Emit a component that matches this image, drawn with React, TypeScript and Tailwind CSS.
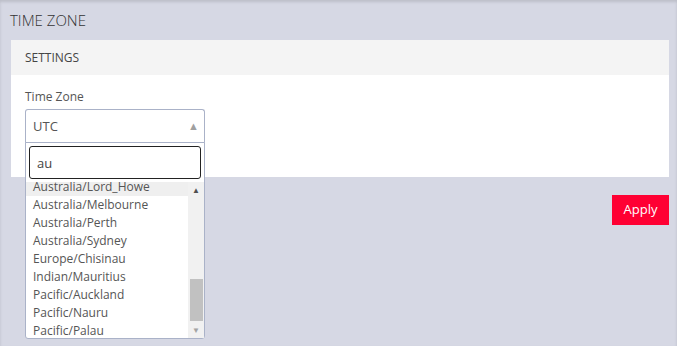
import { useState } from "react"

const zones = [
    "Australia/Lord_Howe",
    "Australia/Melbourne",
    "Australia/Perth",
    "Australia/Sydney",
    "Europe/Chisinau",
    "Indian/Mauritius",
    "Pacific/Auckland",
    "Pacific/Nauru",
    "Pacific/Palau",
]

function ZoneSelect() {
    const [query, setQuery] = useState("au")
    return (
        <div className="relative w-[180px]">
            <div className="flex h-[34px] items-center justify-between rounded-t-[3px] border border-b-0 border-[#aab2c8] bg-white pl-[7px] pr-[5px] text-[13px] text-[#555]">
                <span>UTC</span>
                <span className="text-[11px] text-[#a0a0a0]">▲</span>
            </div>
            <div className="absolute left-0 top-[33px] z-10 w-[180px] rounded-b-[3px] border border-[#aab2c8] bg-white">
                <div className="p-[3px]">
                    <input
                        value={query}
                        onChange={(e) => setQuery(e.target.value)}
                        autoFocus
                        className="h-[33px] w-full rounded-[3px] border border-[#222] px-[7px] text-[13px] text-[#444] outline-none"
                    />
                </div>
                <div className="flex h-[156px] overflow-hidden">
                    <ul className="-mt-[4px] flex-1 text-[12px] leading-[18px] text-[#555]">
                        {zones.map((z, i) => (
                            <li key={z} className={i === 0 ? "bg-[#efefef] pl-[7px]" : "pl-[7px]"}>
                                {z}
                            </li>
                        ))}
                    </ul>
                    <div className="flex w-[16px] flex-col items-center bg-[#f1f1f1]">
                        <span className="mt-[2px] text-[8px] leading-[12px] text-[#505050]">▲</span>
                        <div className="flex-1" />
                        <div className="h-[42px] w-[13px] bg-[#c1c1c1]" />
                        <span className="mb-[2px] mt-[3px] text-[8px] leading-[12px] text-[#a3a3a3]">▼</span>
                    </div>
                </div>
            </div>
        </div>
    )
}

export default function App() {
    return (
        <div
            className="h-[346px] w-[677px] overflow-hidden bg-[#d6d8e4] shadow-[inset_0_2px_3px_rgba(0,0,0,0.12)]"
            style={{ fontFamily: '"Open Sans", "Liberation Sans", sans-serif' }}
        >
            <h1 className="flex h-[40px] items-center pl-[10px] pt-[1px] text-[15px] font-light text-[#333]">TIME ZONE</h1>
            <div className="ml-[11px] mr-[8px] bg-white">
                <div className="flex h-[35px] items-center bg-[#f4f4f4] px-[14px] text-[12px] text-[#454545]">SETTINGS</div>
                <div className="h-[102px] px-[14px] pt-[14px]">
                    <div className="mb-[4px] text-[12px] leading-[16px] text-[#555]">Time Zone</div>
                    <ZoneSelect />
                </div>
            </div>
            <div className="mr-[8px] mt-[18px] flex justify-end">
                <button className="h-[30px] w-[57px] bg-[#ff0033] text-[13px] text-white">Apply</button>
            </div>
        </div>
    )
}
